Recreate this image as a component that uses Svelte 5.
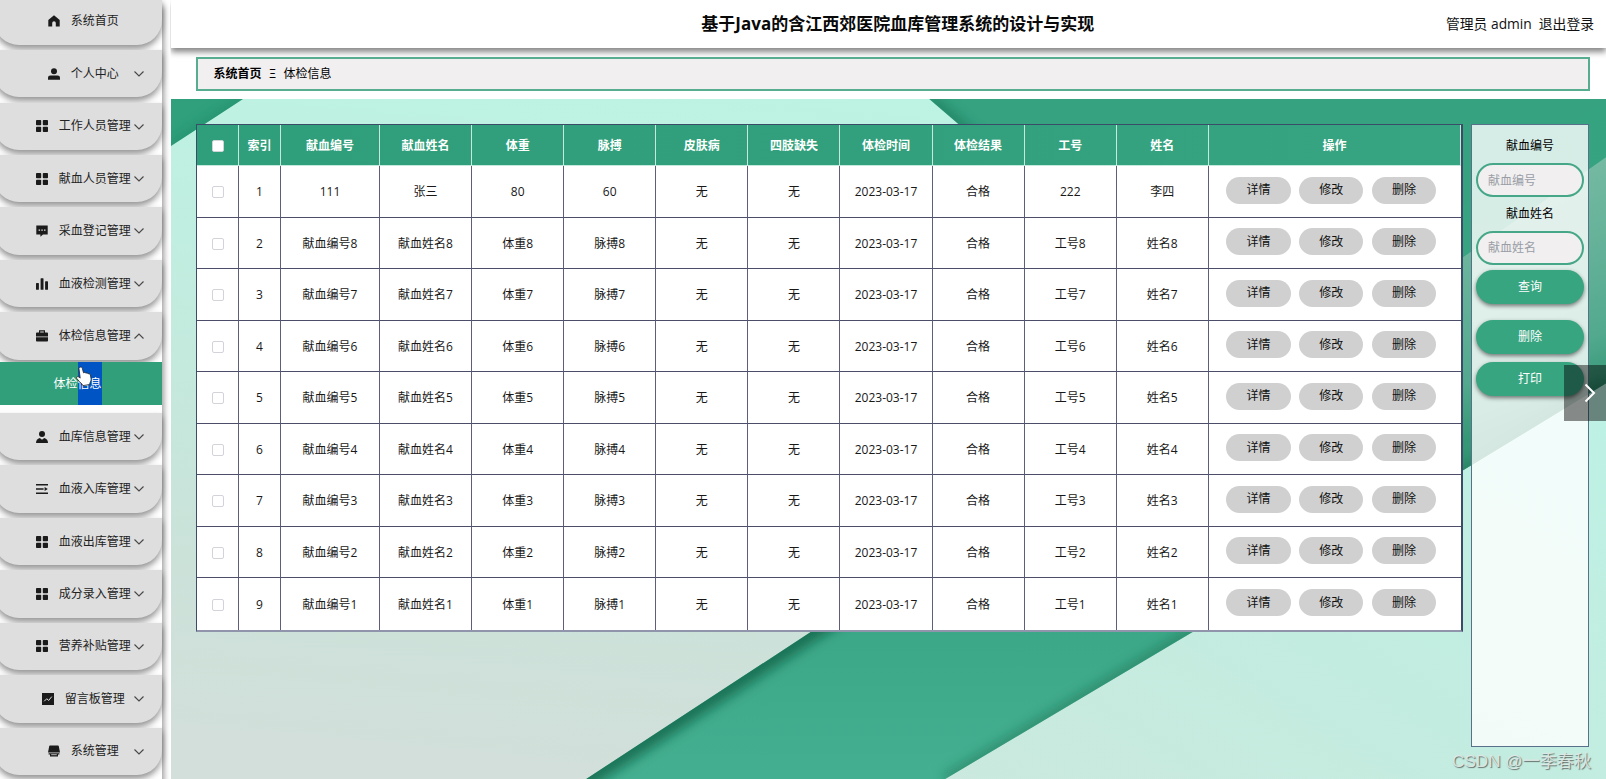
<script>
  const menu = [
    { label: '系统首页', icon: 'home' },
    { label: '个人中心', icon: 'user', arrow: true },
    { label: '工作人员管理', icon: 'grid', arrow: true },
    { label: '献血人员管理', icon: 'grid', arrow: true },
    { label: '采血登记管理', icon: 'chat', arrow: true },
    { label: '血液检测管理', icon: 'bars', arrow: true },
    { label: '体检信息管理', icon: 'case', arrow: true, child: ['体检', '信息'] },
    { label: '血库信息管理', icon: 'person', arrow: true },
    { label: '血液入库管理', icon: 'lines', arrow: true },
    { label: '血液出库管理', icon: 'grid', arrow: true },
    { label: '成分录入管理', icon: 'grid', arrow: true },
    { label: '营养补贴管理', icon: 'grid', arrow: true },
    { label: '留言板管理', icon: 'board', arrow: true },
    { label: '系统管理', icon: 'device', arrow: true }
  ];

  const heads = ['索引', '献血编号', '献血姓名', '体重', '脉搏', '皮肤病', '四肢缺失', '体检时间', '体检结果', '工号', '姓名', '操作'];

  const rows = [['1', '111', '张三', '80', '60', '无', '无', '2023-03-17', '合格', '222', '李四']];
  for (let i = 2; i <= 9; i++) {
    const n = 10 - i;
    rows.push([`${i}`, `献血编号${n}`, `献血姓名${n}`, `体重${n}`, `脉搏${n}`, '无', '无', '2023-03-17', '合格', `工号${n}`, `姓名${n}`]);
  }
</script>

{#snippet icon(name)}
  <svg class="icon" viewBox="0 0 12 12" width="12" height="12">
    {#if name === 'home'}
      <path d="M6 .3 0.3 5v6.5h3.9V8a1.8 1.8 0 0 1 3.6 0v3.5h3.9V5z" />
    {:else if name === 'user'}
      <circle cx="6" cy="3.2" r="3" />
      <path d="M0 11.8V9.6Q0 7.4 2.4 7.4h7.2q2.4 0 2.4 2.2v2.2z" />
    {:else if name === 'grid'}
      <rect width="5.2" height="5.2" rx=".8" />
      <rect x="6.8" width="5.2" height="5.2" rx=".8" />
      <rect y="6.8" width="5.2" height="5.2" rx=".8" />
      <rect x="6.8" y="6.8" width="5.2" height="5.2" rx=".8" />
    {:else if name === 'chat'}
      <path d="M.3.5h11.4v9H7L4.4 11.8V9.5H.3z" />
      <path d="M2.6 4.4h1.5v1.3H2.6zM5.3 4.4h1.5v1.3H5.3zM8 4.4h1.5v1.3H8z" fill="#dedede" />
    {:else if name === 'bars'}
      <rect y="5" width="2.9" height="6.8" rx=".6" />
      <rect x="4.6" y=".2" width="2.9" height="11.6" rx=".6" />
      <rect x="9.1" y="3.2" width="2.9" height="8.6" rx=".6" />
    {:else if name === 'case'}
      <path d="M3 2.6V.3h6v2.3h2.2q.8 0 .8.8v3H0v-3q0-.8.8-.8zm1.2 0h3.6V1.4H4.2z" fill-rule="evenodd" />
      <path d="M0 7.2h12v3.6q0 .8-.8.8H.8q-.8 0-.8-.8z" />
    {:else if name === 'person'}
      <circle cx="6" cy="3" r="3" />
      <path d="M0 12q0-4.2 3.8-5.1L6 8.8l2.2-1.9Q12 7.8 12 12z" />
    {:else if name === 'lines'}
      <path d="M0 1h12v1.6H0zM0 5.2h7.6v1.6H0zM0 9.4h12V11H0zM8.6 3.9 11.8 6 8.6 8.1z" />
    {:else if name === 'board'}
      <path d="M0 0h12v12H0z" />
      <path d="m2.2 8.3 2.6-2.6 1.8 1.8 3.2-3.9" fill="none" stroke="#dedede" stroke-width="1" />
    {:else if name === 'device'}
      <path d="M2 .5h8q.7 0 .8.7L12 7.5H0L1.2 1.2Q1.3.5 2 .5zM.6 8.3h10.8v1.3h-1.4v2H2v-2H.6z" />
      <path d="M3.2 9.7h5.6" stroke="#dedede" stroke-width=".8" />
    {/if}
  </svg>
{/snippet}

<div class="app">
  <aside>
    {#each menu as m}
      <div class="item">
        {@render icon(m.icon)}
        <span>{m.label}</span>
        {#if m.arrow}
          <svg class="arrow" class:up={m.child} viewBox="0 0 10 6" width="10" height="6"><path d="M.5.5 5 5 9.5.5" /></svg>
        {/if}
      </div>
      {#if m.child}
        <div class="sub">
          <span>{m.child[0]}</span><span class="sel">{m.child[1]}</span>
          <svg class="hand" viewBox="0 0 16 20" width="16" height="20">
            <path d="M4.1 1.2c1-.4 1.9.1 2.2 1.1l1.2 4.5c.8-.6 1.9-.4 2.4.4.8-.5 1.9-.2 2.3.6.9-.3 1.9.2 2.2 1.2l.6 3.4c.3 1.8-.3 3.3-1.100 4.600l-.2 1.600-6.900 1-.8-1.500C4.300 16.700 2.700 14.700.9 12.700c-.8-1-.1-2.200 1-2.100.8.1 1.600.8 2.300 1.500L3 2.900c-.2-.8.3-1.400 1.100-1.700z" />
          </svg>
        </div>
      {/if}
    {/each}
  </aside>

  <main>
    <header>
      <h1>基于Java的含江西郊医院血库管理系统的设计与实现</h1>
      <div class="account"><span>管理员 admin</span><span>退出登录</span></div>
    </header>
    <nav><b>系统首页</b><i>Ξ</i><span>体检信息</span></nav>

    <section>
      <svg class="art" viewBox="171 99 1435 680" preserveAspectRatio="none">
        <defs>
          <linearGradient id="mint" x1=".55" y1="0" x2=".35" y2="1">
            <stop offset="0" stop-color="#bdf3e3" /><stop offset=".3" stop-color="#c0eee0" />
            <stop offset=".75" stop-color="#cbe2d9" /><stop offset="1" stop-color="#d2dfda" />
          </linearGradient>
          <linearGradient id="mint2" x1="1" y1="0" x2="0" y2="1">
            <stop offset="0" stop-color="#bdf2e4" /><stop offset=".55" stop-color="#c3ece0" /><stop offset="1" stop-color="#cbe9de" />
          </linearGradient>
          <linearGradient id="green" x1="0" y1="0" x2="0" y2="1">
            <stop offset="0" stop-color="#35a280" /><stop offset=".75" stop-color="#3ba685" /><stop offset="1" stop-color="#45b091" />
          </linearGradient>
          <linearGradient id="pale" gradientUnits="userSpaceOnUse" x1="1500" y1="200" x2="1575" y2="400">
            <stop offset="0" stop-color="#74b9a2" /><stop offset=".75" stop-color="#52a98e" /><stop offset="1" stop-color="#359775" />
          </linearGradient>
          <filter id="soft" filterUnits="userSpaceOnUse" x="100" y="50" width="1600" height="800"><feGaussianBlur stdDeviation="6" /></filter>
          <clipPath id="band"><path d="M586 779 812 631 1463 205 1606 99V383L1463 470 1194 631 945 779z" /></clipPath>
          <clipPath id="top"><path d="M929 99 1300 418 1606 300V99z" /></clipPath>
          <clipPath id="corner"><path d="M171 99h72L171 146z" /></clipPath>
        </defs>
        <rect x="171" y="99" width="1435" height="680" fill="url(#mint)" />
        <path d="M945 779 1194 631 1463 470 1606 383V779z" fill="url(#mint2)" />
        <path d="M171 99h72L171 146z" fill="#30a07c" />
        <path d="M243 99 171 146" stroke="#1d8260" stroke-width="8" opacity=".55" filter="url(#soft)" clip-path="url(#corner)" />
        <path d="M929 99 1300 418 1606 300V99z" fill="#36a280" />
        <g clip-path="url(#top)"><path d="M929 99 1300 418" stroke="#147353" stroke-width="12" opacity=".6" filter="url(#soft)" /></g>
        <path d="M586 779 812 631 1463 205 1606 99V383L1463 470 1194 631 945 779z" fill="url(#green)" />
        <path d="M1400 301 1606 157V383L1463 470 1400 506z" fill="url(#pale)" />
        <g clip-path="url(#band)">
          <path d="M571 789 1100 443" stroke="#0d6045" stroke-width="20" opacity=".75" filter="url(#soft)" />
          <path d="M945 779 1194 631 1463 470 1606 383" fill="none" stroke="#12694c" stroke-width="8" opacity=".6" filter="url(#soft)" />
        </g>
      </svg>

      <div class="content">
        <div class="table">
          <div class="row head">
            <div class="cell"><em class="check"></em></div>
            {#each heads as h}<div class="cell">{h}</div>{/each}
          </div>
          {#each rows as r}
            <div class="row">
              <div class="cell"><em class="check"></em></div>
              {#each r as c}<div class="cell">{c}</div>{/each}
              <div class="cell ops"><button>详情</button><button>修改</button><button>删除</button></div>
            </div>
          {/each}
        </div>

        <div class="panel">
          <span class="label">献血编号</span>
          <input placeholder="献血编号" />
          <span class="label">献血姓名</span>
          <input placeholder="献血姓名" />
          <button class="query">查询</button>
          <button>删除</button>
          <button>打印</button>
        </div>
      </div>
    </section>
  </main>

  <div class="next"><svg viewBox="0 0 12 20" width="12" height="20"><path d="M1.5 1.5 10 10 1.5 18.5" /></svg></div>
  <div class="mark">CSDN @一季春秋</div>
</div>

<style>
  :global(body) { margin: 0; overflow: hidden; }
  .app, button, input {
    font-family: "Open Sans", "Noto Sans CJK SC", sans-serif;
    font-size: 12px;
  }
  .app {
    position: relative;
    display: flex;
    gap: 8.5px;
    width: 1606px;
    height: 779px;
    overflow: hidden;
    background: #fff;
    color: #111;
    line-height: 16px;
  }
  * { box-sizing: border-box; }
  aside {
    flex: none;
    width: 162px;
    height: 779px;
    background: #fff;
    box-shadow: 2px 7px 6px rgba(0, 0, 0, .4);
    clip-path: inset(0 -8px 0 0);
  }
  .item {
    position: relative;
    display: flex;
    align-items: center;
    justify-content: center;
    gap: 10.5px;
    width: 168px;
    height: 47.4px;
    margin: 0 0 5.07px -6px;
    padding: 0 0 0 11px;
    border-radius: 0 0 25px 25px;
    background: #dedede;
    box-shadow: 0 4px 6px rgba(0, 0, 0, .42);
    color: #222;
  }
  .item:first-child { margin-top: -2.4px; }
  .icon { flex: none; fill: #1b1b1b; }
  .arrow {
    position: absolute;
    right: 18px;
    top: 21px;
    fill: none;
    stroke: #484848;
    stroke-width: 1.15;
  }
  .up { transform: scaleY(-1); }
  .sub {
    position: relative;
    display: flex;
    justify-content: center;
    height: 42.4px;
    margin: -2.3px 0 8.1px;
    padding-right: 7px;
    background: #329f7b;
    color: #fff;
    line-height: 43px;
  }
  .sel { background: #0054c4; }
  .hand { position: absolute; left: 76px; top: 4px; fill: #fff; stroke: #222; stroke-width: .8; }

  main { flex: 1; display: flex; flex-direction: column; }
  header {
    position: relative;
    display: flex;
    align-items: center;
    justify-content: center;
    height: 48px;
    padding-right: 12px;
    background: #fff;
    box-shadow: 0 4px 6px rgba(0, 0, 0, .48);
    clip-path: inset(0 0 -12px 0);
  }
  h1 { margin: 0 0 0 31px; font-size: 17px; line-height: 24px; color: #080808; white-space: nowrap; }
  .account {
    position: absolute;
    right: 12px;
    display: flex;
    gap: 7px;
    padding-bottom: 1px;
    font-size: 13.8px;
    white-space: nowrap;
  }
  nav {
    position: relative;
    display: flex;
    align-items: center;
    height: 34px;
    margin: 9px 16.5px 8px 25.5px;
    padding: 0 0 1px 15.5px;
    border: 2px solid #56ad90;
    background: #f1efef;
    color: #000;
  }
  nav i { width: 22px; text-align: center; font-style: normal; font-size: 12px; }
  section { position: relative; height: 680px; }
  .art { position: absolute; inset: 0; width: 100%; height: 100%; }
  .content { position: relative; display: flex; gap: 8px; padding: 25px 16px 0 25.5px; align-items: flex-start; }

  .table {
    width: 1267px;
    border: 1px solid #3c4c68;
    border-width: 1px 2px 2px 1px;
    border-bottom-color: #9095ab;
  }
  .row {
    display: grid;
    grid-template-columns: 42px 42px 99px repeat(9, 92.1px) 1fr;
    height: 51.5px;
    background: #fff;
  }
  .cell {
    display: flex;
    align-items: center;
    justify-content: center;
    padding-top: 1px;
    border-right: 1px solid #5d5f7a;
    border-bottom: 1px solid #4c4d69;
    color: #181818;
    white-space: nowrap;
  }
  .row:not(.head) .cell { padding-top: 2px; }
  .row:not(.head) .cell:last-child { border-right: 0; }
  .row:last-child .cell { border-bottom: 0; }
  .head { height: 41px; background: linear-gradient(90deg, #2f9e7a, #33a07d 55%, #38a582); }
  .head .cell { border-color: #c5e9dd; color: #fff; font-weight: 700; }
  .check { width: 12px; height: 12px; border: 1px solid #d2d4da; border-radius: 2px; background: #fff; }
  button {
    border: 0;
    padding: 0;
    line-height: 16px;
  }
  .row .cell.ops { justify-content: flex-start; gap: 8.5px; padding: 0 0 2px 17.5px; }
  .ops button { width: 64.3px; height: 27px; border-radius: 14px; background: #d0d0d0; color: #111; }

  .panel {
    display: flex;
    flex-direction: column;
    align-items: stretch;
    width: 118px;
    height: 622.5px;
    padding: 0 4px;
    border: 1px solid #59708a;
    background: rgba(255, 255, 255, .8);
  }
  .label { height: 38px; padding-top: 13px; text-align: center; color: #000; }
  input {
    width: 100%;
    height: 34px;
    padding: 0 10px;
    border: 2px solid #45a787;
    border-radius: 17px;
    background: #f1efef;
    outline: 0;
  }
  input + .label { height: 33.5px; padding-top: 9px; }
  input::placeholder { color: #999da6; opacity: 1; }
  .panel button {
    height: 34px;
    margin-top: 8px;
    border-radius: 17px;
    background: #38a581;
    box-shadow: 0 2px 4px rgba(0, 0, 0, .5);
    color: #fff;
  }
  .panel .query { margin: 5px 0 8.7px; }

  .next {
    position: absolute;
    left: 1564px;
    top: 365px;
    display: flex;
    align-items: center;
    justify-content: center;
    width: 42px;
    height: 56px;
    padding-left: 10px;
    background: rgba(0, 0, 0, .45);
  }
  .next path { fill: none; stroke: #fff; stroke-width: 2; }
  .mark {
    position: absolute;
    right: 15px;
    top: 750.5px;
    font-family: "Liberation Sans", "Noto Sans CJK SC", sans-serif;
    font-size: 17.1px;
    line-height: 22px;
    color: rgba(225, 235, 231, .9);
    text-shadow: 1px 1px 1px #65716d;
    white-space: nowrap;
  }
</style>
